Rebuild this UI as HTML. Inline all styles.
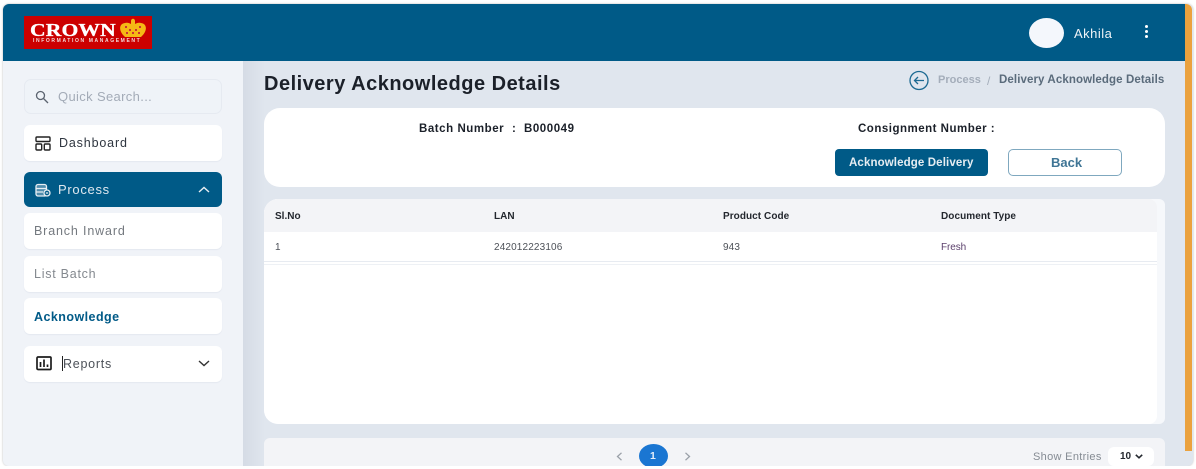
<!DOCTYPE html>
<html>
<head>
<meta charset="utf-8">
<style>
html,body{margin:0;padding:0;width:1196px;height:469px;overflow:hidden;background:#fff;font-family:"Liberation Sans",sans-serif}
.abs,.t{position:absolute}
.t{white-space:nowrap;line-height:1}
#app{position:absolute;left:3px;top:4px;width:1190px;height:462px;border-radius:6px;overflow:hidden;background:#e0e6ee;box-shadow:0 0 2px #bbb}
.card{position:absolute;left:24px;width:198px;height:36px;background:#fff;border-radius:6px;box-shadow:0 1px 1px #e4e8f0}
svg{position:absolute;overflow:visible}
</style>
</head>
<body>
<div id="app"></div>
<!-- header -->
<div class="abs" style="left:3px;top:4px;width:1182px;height:57px;background:#005a87;border-radius:6px 0 0 0"></div>
<div class="abs" style="left:1185px;top:4px;width:7px;height:447px;background:#eba23e;border-radius:0 6px 0 0"></div>
<!-- logo -->
<div class="abs" style="left:24px;top:16px;width:128px;height:33px;background:#cc0000"></div>
<div class="t" style="left:30px;top:21px;font-family:'Liberation Serif',serif;font-weight:bold;font-size:18px;color:#fff;letter-spacing:.1px;transform:scaleX(1.2);transform-origin:left;-webkit-text-stroke:.3px #fff">CROWN</div>
<div class="t" style="left:33px;top:39px;font-size:5px;font-weight:bold;color:#f3d9d9;letter-spacing:1.62px">INFORMATION MANAGEMENT</div>
<svg style="left:119px;top:18px" width="28" height="20" viewBox="0 0 28 20"><path d="M6 19 C0 14 -1 6 6 5 C9 4.500 10 5 12 6 L12 3 C12 0 16 0 16 3 L16 6 C18 5 19 4.500 22 5 C29 6 28 14 22 19 Z" fill="#f5b915"/><path d="M6 8h2v2H6zM20 8h2v2h-2zM10 11h2v2h-2zM16 11h2v2h-2zM13 14h2v2h-2zM7 14h2v2H7zM19 14h2v2h-2z" fill="#c33"/></svg>
<!-- user -->
<div class="abs" style="left:1029px;top:18px;width:35px;height:30px;border-radius:50%;background:#f4f7fc"></div>
<div class="t" style="left:1074px;top:27px;font-size:13px;color:#eef3f7;letter-spacing:.5px">Akhila</div>
<div class="abs" style="left:1145px;top:25px;width:3px;height:3px;border-radius:50%;background:#fff"></div>
<div class="abs" style="left:1145px;top:30px;width:3px;height:3px;border-radius:50%;background:#fff"></div>
<div class="abs" style="left:1145px;top:35px;width:3px;height:3px;border-radius:50%;background:#fff"></div>
<!-- sidebar -->
<div class="abs" style="left:3px;top:61px;width:240px;height:405px;background:#f0f3f8;border-radius:0 0 0 6px"></div>
<div class="abs" style="left:243px;top:61px;width:22px;height:405px;background:linear-gradient(90deg,#d5dbe5,#e0e6ee)"></div>
<div class="abs" style="left:24px;top:79px;width:196px;height:33px;border:1px solid #e6eaf1;border-radius:7px;background:#eff3f8"></div>
<svg style="left:35px;top:90px" width="14" height="14" viewBox="0 0 14 14" fill="none" stroke="#5c6470" stroke-width="1.3"><circle cx="5.500" cy="5.500" r="4"/><path d="M8.500 8.500L13 13"/></svg>
<div class="t" style="left:58px;top:90px;font-size:13px;color:#a3abb7;letter-spacing:.35px">Quick Search...</div>

<div class="card" style="top:125px"></div>
<svg style="left:35px;top:136px" width="16" height="15" viewBox="0 0 16 15" fill="none" stroke="#222" stroke-width="1.4"><rect x="1" y="1" width="14" height="4.500" rx="1"/><rect x="1" y="8" width="5.700" height="6" rx="1"/><rect x="9.300" y="8" width="5.700" height="6" rx="1"/></svg>
<div class="t" style="left:59px;top:137px;font-size:12.5px;color:#2f3640;letter-spacing:.85px">Dashboard</div>

<div class="card" style="top:172px;height:35px;background:#005a87;box-shadow:none"></div>
<svg style="left:35px;top:183px" width="16" height="15" viewBox="0 0 16 15" fill="none" stroke="#e8eef3" stroke-width="1.3"><rect x="1" y="1.500" width="10.500" height="11.500" rx="2" fill="#e8eef3" fill-opacity=".35"/><path d="M1 5.500h10.500M1 9h7"/><circle cx="12" cy="10" r="3" fill="#005a87"/><path d="M10.800 10h2.400"/></svg>
<div class="t" style="left:58px;top:183px;font-size:13px;color:#dfe8ef;letter-spacing:.7px">Process</div>
<svg style="left:198px;top:186px" width="12" height="7" viewBox="0 0 12 7" fill="none" stroke="#e8eef3" stroke-width="1.4"><path d="M1 6L6 1.500L11 6"/></svg>

<div class="card" style="top:213px"></div>
<div class="t" style="left:34px;top:225px;font-size:12.5px;color:#74797f;letter-spacing:.85px">Branch Inward</div>
<div class="card" style="top:256px"></div>
<div class="t" style="left:34px;top:268px;font-size:12.5px;color:#84898f;letter-spacing:.75px">List Batch</div>
<div class="card" style="top:298px"></div>
<div class="t" style="left:34px;top:311px;font-size:12.5px;font-weight:bold;color:#005a87;letter-spacing:.45px">Acknowledge</div>
<div class="card" style="top:346px"></div>
<svg style="left:36px;top:356px" width="16" height="15" viewBox="0 0 16 15" fill="none" stroke="#1c1c1c"><rect x="1" y="1" width="14" height="12.500" rx="1" stroke-width="1.700"/><path d="M4.500 11V6M8 11V3.500M11.500 11V8.500" stroke-width="1.700"/></svg>
<div class="abs" style="left:62px;top:356px;width:1px;height:15px;background:#222"></div>
<div class="t" style="left:63px;top:358px;font-size:12.5px;color:#4c5158;letter-spacing:.75px">Reports</div>
<svg style="left:198px;top:360px" width="12" height="7" viewBox="0 0 12 7" fill="none" stroke="#333" stroke-width="1.4"><path d="M1 1L6 5.500L11 1"/></svg>

<!-- title -->
<div class="t" style="left:264px;top:74px;font-size:20px;font-weight:bold;color:#1b2029;letter-spacing:.5px">Delivery Acknowledge Details</div>
<svg style="left:909px;top:71px" width="20" height="19" viewBox="0 0 20 19" fill="none" stroke="#1d6a92" stroke-width="1.3"><circle cx="10" cy="9.500" r="9"/><path d="M15 9.500H5.500M9 6L5.500 9.500L9 13"/></svg>
<div class="t" style="left:938px;top:75px;font-size:11px;font-weight:bold;color:#a4adba">Process</div>
<div class="t" style="left:987px;top:75px;font-size:12px;color:#a4adba">/</div>
<div class="t" style="left:999px;top:75px;font-size:11.5px;font-weight:bold;color:#5a6b7b;letter-spacing:.1px">Delivery Acknowledge Details</div>

<!-- info card -->
<div class="abs" style="left:264px;top:108px;width:901px;height:79px;background:#fff;border-radius:16px"></div>
<div class="t" style="left:419px;top:124px;font-size:11.500px;font-weight:bold;color:#1b2029;letter-spacing:.55px">Batch Number</div>
<div class="t" style="left:512px;top:124px;font-size:11.500px;font-weight:bold;color:#1b2029">:</div>
<div class="t" style="left:524px;top:124px;font-size:11.500px;font-weight:bold;color:#1b2029;letter-spacing:.55px">B000049</div>
<div class="t" style="left:858px;top:124px;font-size:11.500px;font-weight:bold;color:#1b2029;letter-spacing:.5px">Consignment Number :</div>
<div class="abs" style="left:835px;top:149px;width:153px;height:27px;background:#005a87;border-radius:4px"></div>
<div class="t" style="left:849px;top:158px;font-size:11.500px;font-weight:bold;color:#e6edf2;letter-spacing:.12px">Acknowledge Delivery</div>
<div class="abs" style="left:1008px;top:149px;width:112px;height:25px;border:1px solid #7fa8bf;border-radius:5px;background:#fff"></div>
<div class="t" style="left:1051px;top:156px;font-size:13px;font-weight:bold;color:#3f7595">Back</div>

<!-- table -->
<div class="abs" style="left:264px;top:199px;width:901px;height:225px;background:#f6f8fb;border-radius:14px 6px 6px 14px"></div>
<div class="abs" style="left:264px;top:199px;width:893px;height:225px;background:#fff;border-radius:14px 8px 8px 14px;overflow:hidden">
  <div class="abs" style="left:0;top:0;width:893px;height:33px;background:#f3f4f7"></div>
  <div class="abs" style="left:0;top:62px;width:893px;height:1px;background:#e7ebf1"></div>
  <div class="abs" style="left:0;top:65px;width:893px;height:1px;background:#eef1f5"></div>
</div>
<div class="t" style="left:275px;top:212px;font-size:10px;font-weight:bold;color:#23272e">Sl.No</div>
<div class="t" style="left:494px;top:212px;font-size:10px;font-weight:bold;color:#23272e">LAN</div>
<div class="t" style="left:723px;top:212px;font-size:10px;font-weight:bold;color:#23272e;letter-spacing:.06px">Product Code</div>
<div class="t" style="left:941px;top:212px;font-size:10px;font-weight:bold;color:#23272e;letter-spacing:.06px">Document Type</div>
<div class="t" style="left:275px;top:243px;font-size:10px;color:#4d5158">1</div>
<div class="t" style="left:494px;top:243px;font-size:10px;color:#4d5158;letter-spacing:.14px">242012223106</div>
<div class="t" style="left:723px;top:243px;font-size:10px;color:#4d5158;letter-spacing:.1px">943</div>
<div class="t" style="left:941px;top:243px;font-size:10px;color:#5b3f6b;letter-spacing:-.1px">Fresh</div>

<!-- pagination -->
<div class="abs" style="left:264px;top:438px;width:901px;height:28px;background:#f3f4f7;border-radius:6px 6px 0 0"></div>
<svg style="left:616px;top:452px" width="7" height="9" viewBox="0 0 7 9" fill="none" stroke="#9aa0a8" stroke-width="1.3"><path d="M5.500 .8L1.500 4.500L5.500 8.200"/></svg>
<div class="abs" style="left:639px;top:444px;width:29px;height:24px;border-radius:50%;background:#1a76d2"></div>
<div class="abs" style="left:0;top:466px;width:1196px;height:3px;background:#fff"></div>
<div class="t" style="left:650px;top:451px;font-size:10.500px;font-weight:bold;color:#e4eefa">1</div>
<svg style="left:684px;top:452px" width="7" height="9" viewBox="0 0 7 9" fill="none" stroke="#9aa0a8" stroke-width="1.3"><path d="M1.500 .8L5.500 4.500L1.500 8.200"/></svg>
<div class="t" style="left:1033px;top:452px;font-size:11px;color:#858b93;letter-spacing:.32px">Show Entries</div>
<div class="abs" style="left:1108px;top:447px;width:46px;height:19px;background:#fff;border-radius:6px"></div>
<div class="t" style="left:1120px;top:452px;font-size:10px;font-weight:bold;color:#23272e">10</div>
<svg style="left:1135px;top:454px" width="8" height="5" viewBox="0 0 8 5" fill="none" stroke="#23272e" stroke-width="1.6"><path d="M.8 .8L4 3.800L7.200 .8"/></svg>
</body>
</html>
